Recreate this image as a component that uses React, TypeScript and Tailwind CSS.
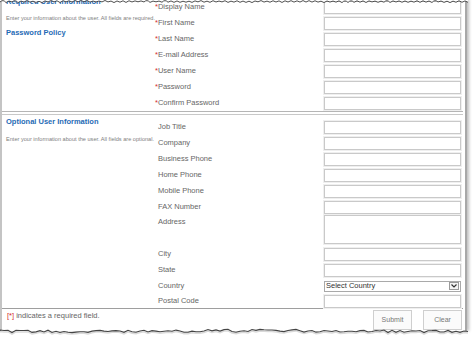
import React from "react";

const FONT = { fontFamily: '"Liberation Sans", Arial, sans-serif' };

const required = [
  "Display Name",
  "First Name",
  "Last Name",
  "E-mail Address",
  "User Name",
  "Password",
  "Confirm Password",
];

const optionalTop = [
  "Job Title",
  "Company",
  "Business Phone",
  "Home Phone",
  "Mobile Phone",
  "FAX Number",
];

// deterministic jitter for the torn edges
function rand(i: number) {
  const x = Math.sin(i * 12.9898) * 43758.5453;
  return x - Math.floor(x);
}

function topEdgePath() {
  let d = "M0 2";
  for (let x = 0; x < 468; x += 6) {
    const h = rand(x) * 1.2;
    d += ` Q${x + 3} ${h - 1} ${x + 6} ${1.8 + rand(x + 1) * 0.8}`;
  }
  return d;
}

function bottomEdgePath() {
  let d = "M0 3";
  for (let x = 0; x <= 470; x += 4) {
    const y = 2 + rand(x * 3) * 2.6 - (x > 200 && x < 300 ? rand(x) * 1.4 : 0);
    d += ` L${x} ${y.toFixed(2)}`;
  }
  return d;
}

function TextBox() {
  return (
    <div className="h-[13px] w-[137px] border border-[#c9c9c9] bg-white shadow-[0_0_0_1px_#efefef]" />
  );
}

function Label({ label, req }: { label: string; req?: boolean }) {
  return (
    <div className="w-[169px] text-[7.5px] text-[#666]">
      {req ? <span className="text-[#d32f2f]">*</span> : <span className="inline-block w-[3px]" />}
      {label}
    </div>
  );
}

function Row({ label, req }: { label: string; req?: boolean }) {
  return (
    <div className="flex h-[16px] items-center">
      <Label label={label} req={req} />
      <TextBox />
    </div>
  );
}

function Heading({ children }: { children: React.ReactNode }) {
  return <div className="text-[7.5px] font-bold leading-[10px] text-[#1f6bb5]">{children}</div>;
}

function Desc({ children }: { children: React.ReactNode }) {
  return <div className="whitespace-nowrap text-[5.6px] leading-[8px] text-[#808080]">{children}</div>;
}

export default function App() {
  return (
    <div className="relative h-[338px] w-[474px] overflow-hidden bg-white" style={FONT}>
      <div className="h-[332px] w-[467px] border-l-2 border-r-2 border-l-[#c4c4c4] border-r-[#a8a8a8] shadow-[2px_0_3px_rgba(0,0,0,0.25)]">
        {/* required section */}
        <div className="-mt-[1px] flex">
          <div className="w-[153px] pl-[4px]">
            <div className="-mt-[2px]">
              <Heading>Required User Information</Heading>
            </div>
            <div className="mt-[7px]">
              <Desc>Enter your information about the user. All fields are required.</Desc>
            </div>
            <div className="mt-[6px]">
              <Heading>Password Policy</Heading>
            </div>
          </div>
          <div>
            {required.map((l) => (
              <Row key={l} label={l} req />
            ))}
          </div>
        </div>

        {/* divider */}
        <div className="mr-[2px] h-[4px] border-t border-b border-t-[#b5b5b5] border-b-[#c8c8c8] border-b-dotted" />

        {/* optional section */}
        <div className="flex pt-[4px]">
          <div className="w-[153px] pl-[4px]">
            <div className="-mt-[2px]">
              <Heading>Optional User Information</Heading>
            </div>
            <div className="mt-[8px]">
              <Desc>Enter your information about the user. All fields are optional.</Desc>
            </div>
          </div>
          <div>
            {optionalTop.map((l) => (
              <Row key={l} label={l} />
            ))}
            <div className="flex h-[31px] pt-[0px]">
              <div className="pt-[1px]">
                <Label label="Address" />
              </div>
              <div className="h-[29px] w-[137px] border border-[#c9c9c9] bg-white shadow-[0_0_0_1px_#efefef]" />
            </div>
            <Row label="City" />
            <Row label="State" />
            <div className="flex h-[16px] items-center">
              <Label label="Country" />
              <div className="flex h-[11px] w-[137px] items-center justify-between border border-[#a9a9a9] bg-white pl-[1px] pr-[1px]">
                <span className="text-[7.5px] leading-none text-[#333]">Select Country</span>
                <span className="flex h-[8px] w-[10px] items-center justify-center border border-[#9a9a9a] bg-[#f4f4f4]">
                  <svg width="6" height="4" viewBox="0 0 6 4">
                    <path d="M0.5 0.5 L3 3 L5.5 0.5" fill="none" stroke="#333" strokeWidth="1.2" />
                  </svg>
                </span>
              </div>
            </div>
            <div className="flex h-[14px] items-center">
              <Label label="Postal Code" />
              <TextBox />
            </div>
          </div>
        </div>

        {/* footer */}
        <div className="mr-[2px] flex h-[22px] items-start justify-between border-t border-t-[#9e9e9e] pl-[5px] pr-[1px] pt-[1px]">
          <div className="text-[7.5px] text-[#666]">
            <span className="text-[#d32f2f]">[*]</span> indicates a required field.
          </div>
          <div className="flex gap-[11px]">
            <button className="h-[20px] w-[39px] border border-[#cfcfcf] bg-[#fbfbfb] text-[7px] text-[#777]">
              Submit
            </button>
            <button className="h-[20px] w-[39px] border border-[#cfcfcf] bg-[#fbfbfb] text-[7px] text-[#777]">
              Clear
            </button>
          </div>
        </div>
      </div>

      {/* torn edges */}
      <svg className="absolute left-0 top-0" width="474" height="4" viewBox="0 0 474 4">
        <path d={topEdgePath() + " L468 0 L0 0 Z"} fill="#fff" />
        <path d={topEdgePath()} fill="none" stroke="#3a3a3a" strokeWidth="0.9" />
      </svg>
      <svg className="absolute left-0 top-[328px]" width="474" height="10" viewBox="0 0 474 10">
        <path d={bottomEdgePath() + " L474 10 L0 10 Z"} fill="#fff" />
        <path d={bottomEdgePath()} fill="none" stroke="#444" strokeWidth="1.1" />
        <path d={bottomEdgePath()} fill="none" stroke="rgba(0,0,0,0.15)" strokeWidth="1.5" transform="translate(0 1.5)" />
      </svg>
    </div>
  );
}
